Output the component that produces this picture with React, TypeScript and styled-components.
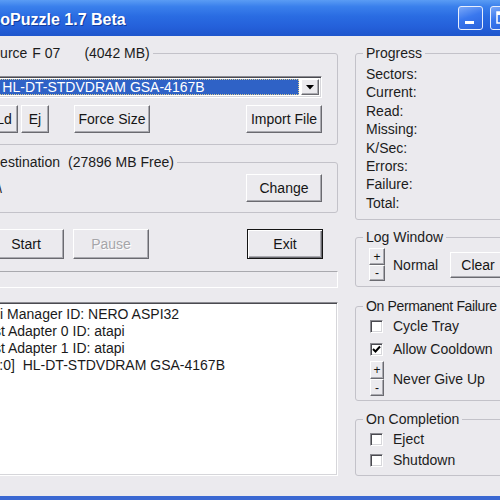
import React from "react";
import styled, { createGlobalStyle, css } from "styled-components";

const Global = createGlobalStyle`
  html, body { margin: 0; padding: 0; overflow: hidden; background: #ebeaee; }
  body { font-family: "Liberation Sans", Arial, sans-serif; }
  * { box-sizing: border-box; }
`;

const FACE = "#ebeaee";

const Window = styled.div`
  margin-left: -40px;
  width: 600px;
  height: 500px;
  display: flex;
  flex-direction: column;
  background: ${FACE};
  border-bottom: 4px solid #3a68d2;
`;

const TitleBar = styled.div`
  height: 36px;
  flex: none;
  display: flex;
  align-items: center;
  padding: 0 13px 0 27px;
  background: linear-gradient(
    180deg,
    #5a9cf4 0%,
    #3a80ec 18%,
    #2a6ce2 45%,
    #2460da 75%,
    #1f56cc 100%
  );
`;

const Title = styled.div`
  color: #fff;
  font: bold 16px "Liberation Sans", Arial, sans-serif;
  text-shadow: 1px 1px 0 #103c9e;
  padding-top: 3px;
  white-space: nowrap;
`;

const Caption = styled.div`
  margin-left: auto;
  display: flex;
  gap: 7px;
`;

const CapBtn = styled.div<{ $close?: boolean }>`
  width: 25px;
  height: 24px;
  border: 1px solid #e8eefc;
  border-radius: 3px;
  display: flex;
  align-items: center;
  justify-content: center;
  background: ${(p) =>
    p.$close
      ? "linear-gradient(160deg, #e88d6e 0%, #d9502c 50%, #c2391b 100%)"
      : "linear-gradient(160deg, #7aa8f8 0%, #3a78ee 45%, #2a62dc 100%)"};
`;

const Client = styled.div`
  flex: 1;
  display: grid;
  grid-template-columns: 366px 190px;
  column-gap: 17px;
  align-items: start;
  padding: 9px 0 0 12px;
`;

const Column = styled.div`
  display: flex;
  flex-direction: column;
`;

const Group = styled.fieldset<{ $pr?: number; $pb?: number; $mt?: number }>`
  margin: ${(p) => p.$mt ?? 0}px 0 0 0;
  min-width: 0;
  border: 1px solid #c3c2c9;
  border-radius: 3px;
  padding: 0 ${(p) => p.$pr ?? 8}px ${(p) => p.$pb ?? 5}px 7px;
`;

const Legend = styled.legend<{ $indent?: number; $tight?: boolean }>`
  padding: 0 3px;
  margin-left: ${(p) => p.$indent ?? 0}px;
  font-size: 14px;
  line-height: 16px;
  color: #1c1c1c;
  white-space: nowrap;
  letter-spacing: ${(p) => (p.$tight ? "-0.35px" : "normal")};
`;

const Gap = styled.span<{ $w: number }>`
  display: inline-block;
  width: ${(p) => p.$w}px;
`;

const raised = css`
  background: ${FACE};
  border: 1px solid;
  border-color: #ffffff #6a6a70 #6a6a70 #ffffff;
  box-shadow: inset -1px -1px 0 #aaaab0;
`;

const sunken = css`
  border: 1px solid;
  border-color: #8c8c92 #ffffff #ffffff #8c8c92;
  box-shadow: inset 1px 1px 0 #4a4a50, inset -1px -1px 0 #d6d6da;
`;

const Btn = styled.button<{
  $w: number;
  $h?: number;
  $ml?: number;
  $auto?: boolean;
  $default?: boolean;
}>`
  ${raised};
  width: ${(p) => p.$w}px;
  height: ${(p) => p.$h ?? 28}px;
  flex: none;
  margin-left: ${(p) => (p.$auto ? "auto" : `${p.$ml ?? 0}px`)};
  padding: 0;
  font: 14px "Liberation Sans", Arial, sans-serif;
  color: #151515;
  &:disabled {
    color: #a6a6aa;
    text-shadow: 1px 1px 0 #ffffff;
  }
  ${(p) =>
    p.$default &&
    css`
      border-color: #141414;
      box-shadow: inset 1px 1px 0 #ffffff, inset -1px -1px 0 #6a6a70,
        inset -2px -2px 0 #aaaab0;
    `}
`;

const Combo = styled.div`
  ${sunken};
  margin-top: 15px;
  height: 22px;
  display: flex;
  align-items: stretch;
  background: #fff;
  padding: 2px;
`;

const ComboValue = styled.div`
  flex: 1;
  display: flex;
  align-items: center;
  background: #2f62c6;
  color: #fff;
  font-size: 14px;
  padding-left: 3px;
  outline: 1px dotted #d8c98f;
  outline-offset: -1px;
  white-space: nowrap;
  overflow: hidden;
`;

const ComboArrow = styled.div`
  ${raised};
  width: 18px;
  margin-left: 2px;
  display: flex;
  align-items: center;
  justify-content: center;
`;

const Row = styled.div<{ $mt?: number; $pl?: number; $pr?: number }>`
  display: flex;
  align-items: center;
  margin-top: ${(p) => p.$mt ?? 0}px;
  padding-left: ${(p) => p.$pl ?? 0}px;
  padding-right: ${(p) => p.$pr ?? 0}px;
`;

const Path = styled.span`
  font-size: 14px;
  color: #1c1c1c;
  margin-left: 4px;
`;

const StatusBox = styled.div`
  margin-top: 12px;
  height: 17px;
  border: 1px solid;
  border-color: #a9a9ae #ffffff #ffffff #a9a9ae;
`;

const Log = styled.div`
  ${sunken};
  margin-top: 14px;
  height: 174px;
  background: #ffffff;
  padding: 3px 3px;
  font-size: 14px;
  line-height: 17px;
  color: #1a1a1a;
  white-space: nowrap;
  overflow: hidden;
`;

const Stats = styled.div`
  margin-top: 4px;
  padding-left: 3px;
  font-size: 14px;
  line-height: 18.4px;
  color: #1c1c1c;
`;

const Spin = styled.div<{ $w: number; $h: number; $ml?: number }>`
  width: ${(p) => p.$w}px;
  height: ${(p) => p.$h}px;
  margin-left: ${(p) => p.$ml ?? 0}px;
  flex: none;
  display: flex;
  flex-direction: column;
`;

const SpinBtn = styled.div`
  ${raised};
  flex: 1;
  display: flex;
  align-items: center;
  justify-content: center;
  font-size: 12px;
  line-height: 1;
  color: #111;
`;

const Label = styled.span<{ $w?: number; $ml?: number }>`
  font-size: 14px;
  color: #1c1c1c;
  margin-left: ${(p) => p.$ml ?? 0}px;
  ${(p) => (p.$w ? `width: ${p.$w}px; flex: none;` : "")}
  white-space: nowrap;
`;

const CheckRow = styled.div<{ $mt?: number }>`
  display: flex;
  align-items: center;
  height: 20px;
  margin-top: ${(p) => p.$mt ?? 0}px;
  padding-left: 7px;
`;

const CheckBox = styled.span`
  ${sunken};
  width: 13px;
  height: 13px;
  flex: none;
  background: #ffffff;
  display: flex;
  align-items: center;
  justify-content: center;
`;

const Check = ({ checked, label, mt }: { checked?: boolean; label: string; mt?: number }) => (
  <CheckRow $mt={mt}>
    <CheckBox>
      {checked && (
        <svg width="9" height="9" viewBox="0 0 9 9">
          <path d="M1 4 L3.5 6.5 L8 1.5" fill="none" stroke="#000" strokeWidth="2" />
        </svg>
      )}
    </CheckBox>
    <Label $ml={10}>{label}</Label>
  </CheckRow>
);

const Spinner = ({ w, h, ml }: { w: number; h: number; ml?: number }) => (
  <Spin $w={w} $h={h} $ml={ml}>
    <SpinBtn>+</SpinBtn>
    <SpinBtn>-</SpinBtn>
  </Spin>
);

export default function App() {
  return (
    <>
      <Global />
      <Window>
        <TitleBar>
          <Title>IsoPuzzle 1.7 Beta</Title>
          <Caption>
            <CapBtn>
              <svg width="23" height="22" viewBox="0 0 23 22">
                <rect x="6" y="14" width="9" height="3" fill="#fff" />
              </svg>
            </CapBtn>
            <CapBtn>
              <svg width="23" height="22" viewBox="0 0 23 22">
                <rect x="6" y="5" width="11" height="11" fill="none" stroke="#fff" strokeWidth="1.5" />
                <rect x="6" y="5" width="11" height="3" fill="#fff" />
              </svg>
            </CapBtn>
            <CapBtn $close>
              <svg width="23" height="22" viewBox="0 0 23 22">
                <path d="M7 6 L16 15 M16 6 L7 15" stroke="#fff" strokeWidth="2" />
              </svg>
            </CapBtn>
          </Caption>
        </TitleBar>
        <Client>
          <Column>
            <Group $pr={15} $pb={11}>
              <Legend>
                Source<Gap $w={5} />F 07<Gap $w={24} />(4042 MB)
              </Legend>
              <Combo>
                <ComboValue>F: HL-DT-STDVDRAM GSA-4167B</ComboValue>
                <ComboArrow>
                  <svg width="8" height="5" viewBox="0 0 8 5">
                    <path d="M0 0 H8 L4 4.5 Z" fill="#000" />
                  </svg>
                </ComboArrow>
              </Combo>
              <Row $mt={7}>
                <Btn $w={28} $ml={10}>Ld</Btn>
                <Btn $w={28} $ml={3}>Ej</Btn>
                <Btn $w={76} $ml={25}>Force Size</Btn>
                <Btn $w={76} $auto>Import File</Btn>
              </Row>
            </Group>
            <Group $pr={15} $pb={10} $mt={9}>
              <Legend $indent={7}>
                Destination<Gap $w={8} />(27896 MB Free)
              </Legend>
              <Row $mt={4}>
                <Path>C:\</Path>
                <Btn $w={76} $auto>Change</Btn>
              </Row>
            </Group>
            <Row $mt={16} $pl={16} $pr={15}>
              <Btn $w={76} $h={30}>Start</Btn>
              <Btn $w={76} $h={30} $ml={9} disabled>
                Pause
              </Btn>
              <Btn $w={76} $h={30} $auto $default>
                Exit
              </Btn>
            </Row>
            <StatusBox />
            <Log>
              <div>Aspi Manager ID: NERO ASPI32</div>
              <div>Host Adapter 0 ID: atapi</div>
              <div>Host Adapter 1 ID: atapi</div>
              <div>[1:0:0]&nbsp; HL-DT-STDVDRAM GSA-4167B</div>
            </Log>
          </Column>
          <Column>
            <Group $pb={7}>
              <Legend>Progress</Legend>
              <Stats>
                <div>Sectors:</div>
                <div>Current:</div>
                <div>Read:</div>
                <div>Missing:</div>
                <div>K/Sec:</div>
                <div>Errors:</div>
                <div>Failure:</div>
                <div>Total:</div>
              </Stats>
            </Group>
            <Group $mt={9} $pb={5}>
              <Legend>Log Window</Legend>
              <Row $mt={3}>
                <Spinner w={16} h={33} ml={6} />
                <Label $ml={8} $w={57}>
                  Normal
                </Label>
                <Btn $w={56} $h={26}>Clear</Btn>
              </Row>
            </Group>
            <Group $mt={11} $pb={4}>
              <Legend $tight>On Permanent Failure</Legend>
              <Check label="Cycle Tray" mt={2} />
              <Check label="Allow Cooldown" checked mt={3} />
              <Row $mt={2}>
                <Spinner w={14} h={35} ml={7} />
                <Label $ml={9}>Never Give Up</Label>
              </Row>
            </Group>
            <Group $mt={10} $pb={5}>
              <Legend>On Completion</Legend>
              <Check label="Eject" mt={2} />
              <Check label="Shutdown" mt={1} />
            </Group>
          </Column>
        </Client>
      </Window>
    </>
  );
}
